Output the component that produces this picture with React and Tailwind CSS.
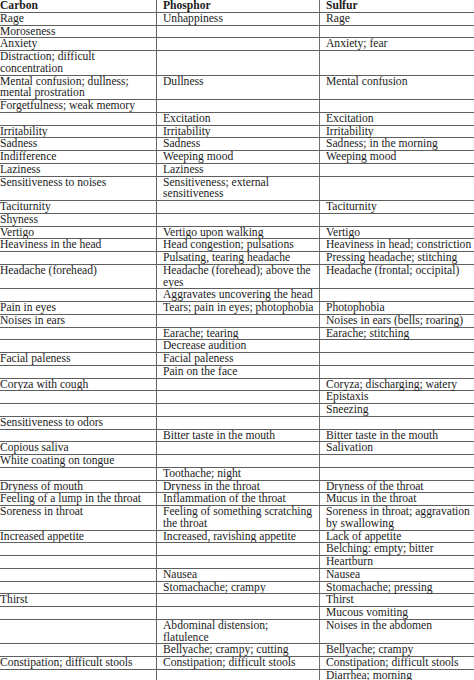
const rows = [
  ["Rage", "Unhappiness", "Rage"],
  ["Moroseness", "", ""],
  ["Anxiety", "", "Anxiety; fear"],
  ["Distraction; difficult\nconcentration", "", ""],
  ["Mental confusion; dullness;\nmental prostration", "Dullness", "Mental confusion"],
  ["Forgetfulness; weak memory", "", ""],
  ["", "Excitation", "Excitation"],
  ["Irritability", "Irritability", "Irritability"],
  ["Sadness", "Sadness", "Sadness; in the morning"],
  ["Indifference", "Weeping mood", "Weeping mood"],
  ["Laziness", "Laziness", ""],
  ["Sensitiveness to noises", "Sensitiveness; external\nsensitiveness", ""],
  ["Taciturnity", "", "Taciturnity"],
  ["Shyness", "", ""],
  ["Vertigo", "Vertigo upon walking", "Vertigo"],
  ["Heaviness in the head", "Head congestion; pulsations", "Heaviness in head; constriction"],
  ["", "Pulsating, tearing headache", "Pressing headache; stitching"],
  ["Headache (forehead)", "Headache (forehead); above the\neyes", "Headache (frontal; occipital)"],
  ["", "Aggravates uncovering the head", ""],
  ["Pain in eyes", "Tears; pain in eyes; photophobia", "Photophobia"],
  ["Noises in ears", "", "Noises in ears (bells; roaring)"],
  ["", "Earache; tearing", "Earache; stitching"],
  ["", "Decrease audition", ""],
  ["Facial paleness", "Facial paleness", ""],
  ["", "Pain on the face", ""],
  ["Coryza with cough", "", "Coryza; discharging; watery"],
  ["", "", "Epistaxis"],
  ["", "", "Sneezing"],
  ["Sensitiveness to odors", "", ""],
  ["", "Bitter taste in the mouth", "Bitter taste in the mouth"],
  ["Copious saliva", "", "Salivation"],
  ["White coating on tongue", "", ""],
  ["", "Toothache; night", ""],
  ["Dryness of mouth", "Dryness in the throat", "Dryness of the throat"],
  ["Feeling of a lump in the throat", "Inflammation of the throat", "Mucus in the throat"],
  ["Soreness in throat", "Feeling of something scratching\nthe throat", "Soreness in throat; aggravation\nby swallowing"],
  ["Increased appetite", "Increased, ravishing appetite", "Lack of appetite"],
  ["", "", "Belching: empty; bitter"],
  ["", "", "Heartburn"],
  ["", "Nausea", "Nausea"],
  ["", "Stomachache; crampy", "Stomachache; pressing"],
  ["Thirst", "", "Thirst"],
  ["", "", "Mucous vomiting"],
  ["", "Abdominal distension;\nflatulence", "Noises in the abdomen"],
  ["", "Bellyache; crampy; cutting", "Bellyache; crampy"],
  ["Constipation; difficult stools", "Constipation; difficult stools", "Constipation; difficult stools"],
  ["", "", "Diarrhea; morning"],
];

function Row({ cells, header }) {
  const weight = header ? "font-bold" : "";
  return (
    <div className="grid grid-cols-[157px_163px_154px] border-b border-[#5f5f5f]">
      <div className={`whitespace-pre overflow-hidden border-r border-[#5f5f5f] pl-0 ${weight}`}>
        {cells[0]}
      </div>
      <div className={`whitespace-pre overflow-hidden border-r border-[#6f6f6f] pl-[6px] ${weight}`}>
        {cells[1]}
      </div>
      <div className={`whitespace-pre pl-[6px] ${weight}`}>{cells[2]}</div>
    </div>
  );
}

export default function App() {
  return (
    <div className="h-[680px] w-[474px] overflow-hidden bg-white font-['Liberation_Serif',serif] text-[11.6px] leading-[11.75px] text-[#1c1c1c]">
      <Row cells={["Carbon", "Phosphor", "Sulfur"]} header />
      {rows.map((r, i) => (
        <Row key={i} cells={r} />
      ))}
    </div>
  );
}
